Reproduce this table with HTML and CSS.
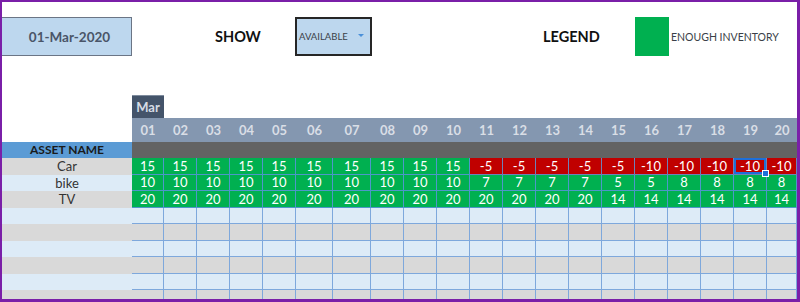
FILE: index.html
```html
<!DOCTYPE html>
<html>
<head>
<meta charset="utf-8">
<link rel="stylesheet" href="styles.css">
</head>
<body>
<div class="frame">
  <header class="top">
    <div class="date">01-Mar-2020</div>
    <div class="show">SHOW</div>
    <div class="select"><span>AVAILABLE</span><span class="caret"></span></div>
    <div class="legend">LEGEND</div>
    <div class="swatch"></div>
    <div class="legend-text">ENOUGH INVENTORY</div>
  </header>
  <div class="sheet">
    <div class="blank"></div><div class="month">Mar</div><div class="blank span-19"></div>

    <div class="blank"></div>
    <div class="day">01</div><div class="day">02</div><div class="day">03</div><div class="day">04</div><div class="day">05</div>
    <div class="day">06</div><div class="day">07</div><div class="day">08</div><div class="day">09</div><div class="day">10</div>
    <div class="day">11</div><div class="day">12</div><div class="day">13</div><div class="day">14</div><div class="day">15</div>
    <div class="day">16</div><div class="day">17</div><div class="day">18</div><div class="day">19</div><div class="day">20</div>

    <div class="name-head">ASSET NAME</div><div class="dark span-20"></div>

    <div class="name gray">Car</div>
    <div class="c g">15</div><div class="c g">15</div><div class="c g">15</div><div class="c g">15</div><div class="c g">15</div>
    <div class="c g">15</div><div class="c g">15</div><div class="c g">15</div><div class="c g">15</div><div class="c g">15</div>
    <div class="c r">-5</div><div class="c r">-5</div><div class="c r">-5</div><div class="c r">-5</div><div class="c r">-5</div>
    <div class="c r">-10</div><div class="c r">-10</div><div class="c r">-10</div><div class="c r sel">-10</div><div class="c r">-10</div>

    <div class="name blue">bike</div>
    <div class="c g">10</div><div class="c g">10</div><div class="c g">10</div><div class="c g">10</div><div class="c g">10</div>
    <div class="c g">10</div><div class="c g">10</div><div class="c g">10</div><div class="c g">10</div><div class="c g">10</div>
    <div class="c g">7</div><div class="c g">7</div><div class="c g">7</div><div class="c g">7</div><div class="c g">5</div>
    <div class="c g">5</div><div class="c g">8</div><div class="c g">8</div><div class="c g">8</div><div class="c g">8</div>

    <div class="name gray">TV</div>
    <div class="c g">20</div><div class="c g">20</div><div class="c g">20</div><div class="c g">20</div><div class="c g">20</div>
    <div class="c g">20</div><div class="c g">20</div><div class="c g">20</div><div class="c g">20</div><div class="c g">20</div>
    <div class="c g">20</div><div class="c g">20</div><div class="c g">20</div><div class="c g">20</div><div class="c g">14</div>
    <div class="c g">14</div><div class="c g">14</div><div class="c g">14</div><div class="c g">14</div><div class="c g">14</div>

    <div class="name blue"></div>
    <div class="c lb"></div><div class="c lb"></div><div class="c lb"></div><div class="c lb"></div><div class="c lb"></div>
    <div class="c lb"></div><div class="c lb"></div><div class="c lb"></div><div class="c lb"></div><div class="c lb"></div>
    <div class="c lb"></div><div class="c lb"></div><div class="c lb"></div><div class="c lb"></div><div class="c lb"></div>
    <div class="c lb"></div><div class="c lb"></div><div class="c lb"></div><div class="c lb"></div><div class="c lb"></div>

    <div class="name gray"></div>
    <div class="c gy"></div><div class="c gy"></div><div class="c gy"></div><div class="c gy"></div><div class="c gy"></div>
    <div class="c gy"></div><div class="c gy"></div><div class="c gy"></div><div class="c gy"></div><div class="c gy"></div>
    <div class="c gy"></div><div class="c gy"></div><div class="c gy"></div><div class="c gy"></div><div class="c gy"></div>
    <div class="c gy"></div><div class="c gy"></div><div class="c gy"></div><div class="c gy"></div><div class="c gy"></div>

    <div class="name blue"></div>
    <div class="c lb"></div><div class="c lb"></div><div class="c lb"></div><div class="c lb"></div><div class="c lb"></div>
    <div class="c lb"></div><div class="c lb"></div><div class="c lb"></div><div class="c lb"></div><div class="c lb"></div>
    <div class="c lb"></div><div class="c lb"></div><div class="c lb"></div><div class="c lb"></div><div class="c lb"></div>
    <div class="c lb"></div><div class="c lb"></div><div class="c lb"></div><div class="c lb"></div><div class="c lb"></div>

    <div class="name gray"></div>
    <div class="c gy"></div><div class="c gy"></div><div class="c gy"></div><div class="c gy"></div><div class="c gy"></div>
    <div class="c gy"></div><div class="c gy"></div><div class="c gy"></div><div class="c gy"></div><div class="c gy"></div>
    <div class="c gy"></div><div class="c gy"></div><div class="c gy"></div><div class="c gy"></div><div class="c gy"></div>
    <div class="c gy"></div><div class="c gy"></div><div class="c gy"></div><div class="c gy"></div><div class="c gy"></div>

    <div class="name blue"></div>
    <div class="c lb"></div><div class="c lb"></div><div class="c lb"></div><div class="c lb"></div><div class="c lb"></div>
    <div class="c lb"></div><div class="c lb"></div><div class="c lb"></div><div class="c lb"></div><div class="c lb"></div>
    <div class="c lb"></div><div class="c lb"></div><div class="c lb"></div><div class="c lb"></div><div class="c lb"></div>
    <div class="c lb"></div><div class="c lb"></div><div class="c lb"></div><div class="c lb"></div><div class="c lb"></div>

    <div class="name gray"></div>
    <div class="c gy"></div><div class="c gy"></div><div class="c gy"></div><div class="c gy"></div><div class="c gy"></div>
    <div class="c gy"></div><div class="c gy"></div><div class="c gy"></div><div class="c gy"></div><div class="c gy"></div>
    <div class="c gy"></div><div class="c gy"></div><div class="c gy"></div><div class="c gy"></div><div class="c gy"></div>
    <div class="c gy"></div><div class="c gy"></div><div class="c gy"></div><div class="c gy"></div><div class="c gy"></div>
  </div>
</div>
</body>
</html>
```
FILE: styles.css
```css
html, body {
  margin: 0;
  padding: 0;
  background: #ffffff;
}

.frame {
  width: 800px;
  height: 302px;
  box-sizing: border-box;
  border-style: solid;
  border-color: #7A1FA8;
  border-width: 2px 3px 3px 2px;
  overflow: hidden;
  font-family: Lato, "Open Sans", sans-serif;
  color: #222;
}

.top {
  display: grid;
  grid-template-columns: 130px 83px 80px 77px 171px 92px 34px 1fr;
  height: 39px;
  margin-top: 15px;
  align-items: center;
}

.date {
  grid-column: 1;
  height: 39px;
  box-sizing: border-box;
  background: #BDD7EE;
  border: 1px solid #6B7585;
  border-left: none;
  display: flex;
  align-items: center;
  justify-content: center;
  font-weight: 700;
  font-size: 13.5px;
  color: #4A5568;
  padding-left: 6px;
}

.show {
  grid-column: 3;
  font-weight: 700;
  font-size: 14.5px;
  color: #111;
}

.select {
  grid-column: 4;
  height: 39px;
  box-sizing: border-box;
  background: #BDD7EE;
  border: 2px solid #262626;
  display: flex;
  align-items: center;
  justify-content: space-between;
  padding: 0 6px 0 2px;
  font-size: 9.5px;
  color: #3A3F48;
}

.caret {
  width: 0;
  height: 0;
  border-left: 3px solid transparent;
  border-right: 3px solid transparent;
  border-top: 3px solid #4A90D9;
  margin-bottom: 2px;
}

.legend {
  grid-column: 6;
  font-weight: 700;
  font-size: 14.5px;
  color: #111;
}

.swatch {
  grid-column: 7;
  height: 39px;
  background: #00B050;
}

.legend-text {
  grid-column: 8;
  font-size: 10.5px;
  color: #3A3F48;
  padding-left: 2px;
}

.sheet {
  margin-top: 39px;
  display: grid;
  grid-template-columns: 130px 32px 33px 33px 33px 33px 37px 38px 33px 33px 33px 33px 33px 33px 33px 33px 33px 33px 33px 33px 1fr;
  grid-template-rows: 23px 23.5px 16.5px repeat(9, 16.5px);
  font-size: 13px;
}

.span-19 {
  grid-column: span 19;
}

.span-20 {
  grid-column: span 20;
}

.month {
  background: #44546A;
  color: #D6DCE5;
  font-weight: 700;
  font-size: 13px;
  display: flex;
  align-items: center;
  justify-content: center;
  border-top: 1px solid #7F8C9E;
  box-sizing: border-box;
}

.day {
  background: #8497B0;
  color: #D9DEE6;
  font-weight: 700;
  font-size: 13px;
  display: flex;
  align-items: center;
  justify-content: center;
}

.name-head {
  background: #5B9BD5;
  color: #1a1a1a;
  font-weight: 700;
  font-size: 12px;
  display: flex;
  align-items: center;
  justify-content: center;
}

.dark {
  background: #636363;
}

.name {
  display: flex;
  align-items: center;
  justify-content: center;
  font-size: 13px;
  color: #333;
}

.name.gray {
  background: #D9D9D9;
}

.name.blue {
  background: #DDEBF7;
}

.c {
  box-sizing: border-box;
  border-right: 1px solid #7EA8DC;
  border-bottom: 1px solid #7EA8DC;
  display: flex;
  align-items: center;
  justify-content: center;
  color: #ffffff;
  font-size: 13px;
}

.c.g {
  background: #00B050;
  border-color: #4E97C9;
}

.c.r {
  background: #C00000;
  border-color: #6E82B8;
}

.c.lb {
  background: #DDEBF7;
}

.c.gy {
  background: #D9D9D9;
}

.c.sel {
  position: relative;
  box-shadow: inset 0 0 0 2px #1E6FD9;
}

.c.sel::after {
  content: "";
  position: absolute;
  right: -3px;
  bottom: -3px;
  width: 5px;
  height: 5px;
  background: #1E6FD9;
  border: 1px solid #ffffff;
  z-index: 2;
}
```
